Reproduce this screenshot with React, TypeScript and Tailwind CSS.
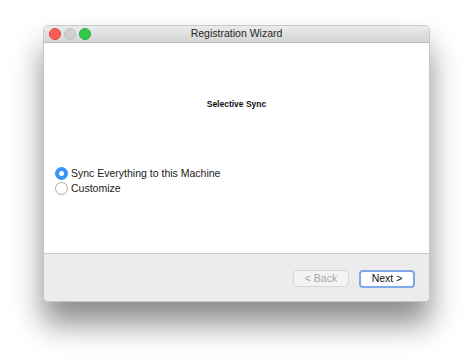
export default function App() {
  return (
    <div className="w-[474px] h-[364px] bg-white pt-[25px] pl-[43px] font-['Liberation_Sans',sans-serif] text-black">
      <div className="w-[387px] h-[277px] flex flex-col rounded-[5px] border border-[#c8c8c8] shadow-[0_22px_30px_rgba(0,0,0,0.45)] overflow-hidden bg-white">
        {/* Title bar */}
        <div className="relative h-[17px] flex items-center bg-gradient-to-b from-[#ebebeb] to-[#d5d5d5] border-b border-[#bdbdbd]">
          <div className="flex items-center gap-[3px] pl-[5px]">
            <span className="w-[12px] h-[12px] rounded-full bg-[#fc5b57] border border-[#e0443e]" />
            <span className="w-[12px] h-[12px] rounded-full bg-[#d0d0d0] border border-[#c1c1c1]" />
            <span className="w-[12px] h-[12px] rounded-full bg-[#34c84a] border border-[#2dac3d]" />
          </div>
          <div className="absolute inset-0 flex items-center justify-center text-[10.5px] text-[#262626]">
            Registration Wizard
          </div>
        </div>

        {/* Content */}
        <div className="flex-1 flex flex-col pl-[11px]">
          <div className="h-[68px] flex items-end justify-center pr-[11px] text-[8.5px] font-bold text-[#111]">
            Selective Sync
          </div>
          <div className="mt-[56px] flex flex-col gap-[2px] text-[10.5px] text-[#1a1a1a]">
            <label className="flex items-center gap-[3px] h-[13px]">
              <span className="w-[13px] h-[13px] rounded-full bg-[#3b93f5] flex items-center justify-center">
                <span className="w-[5px] h-[5px] rounded-full bg-white" />
              </span>
              Sync Everything to this Machine
            </label>
            <label className="flex items-center gap-[3px] h-[13px]">
              <span className="w-[13px] h-[13px] rounded-full bg-white border border-[#a8a8a8]" />
              Customize
            </label>
          </div>
        </div>

        {/* Footer */}
        <div className="h-[48px] bg-[#ececec] border-t border-[#c6c6c6] flex items-center justify-end gap-[10px] pr-[14px] pt-[2px]">
          <button className="w-[56px] h-[17px] rounded-[4px] bg-[#f3f3f3] border border-[#d6d6d6] text-[10.5px] text-[#a9a9a9] flex items-center justify-center">
            &lt; Back
          </button>
          <button className="w-[56px] h-[18px] rounded-[4px] bg-white border-2 border-[#7fa8e6] text-[10.5px] text-[#111] flex items-center justify-center">
            Next &gt;
          </button>
        </div>
      </div>
    </div>
  );
}
